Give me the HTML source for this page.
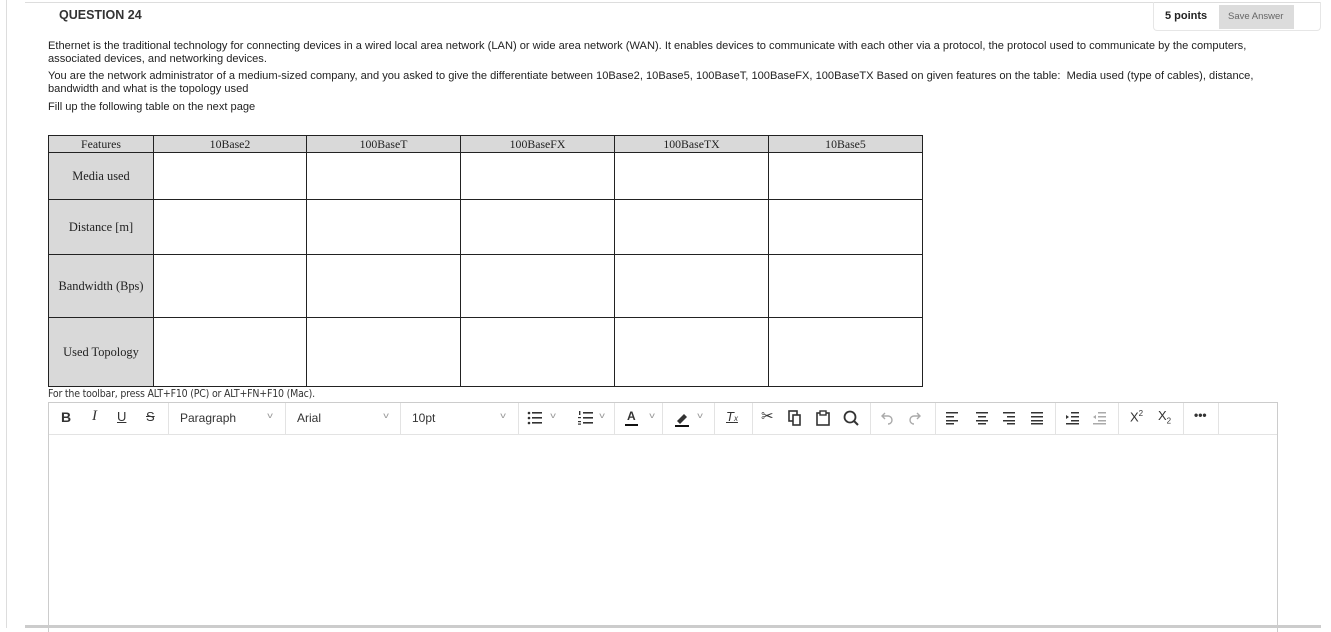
<!DOCTYPE html>
<html><head><meta charset="utf-8"><style>
*{margin:0;padding:0;box-sizing:border-box}
body{width:1331px;height:628px;background:#fff;position:relative;overflow:hidden;font-family:"Liberation Sans",Arial,sans-serif;color:#222}
.a{position:absolute}
.p{font-size:11.1px;color:#222;line-height:12.5px;left:48px;width:1290px}
.c{position:absolute;border:1px solid #222;font-family:"Liberation Serif",serif;font-size:12.4px;color:#222;display:flex;align-items:center;justify-content:center}
.h{font-size:11.8px}
.g{background:#d9d9d9}
.sep{position:absolute;top:403px;height:31px;width:1px;background:#e3e3e3}
.t{position:absolute;top:411px;font-size:12px;color:#333}
.chev{position:absolute;top:411px;font-size:8px;color:#999;transform:scaleX(1.4)}
</style></head><body>
<div class="a" style="left:6px;top:0;width:1px;height:628px;background:#ddd"></div>
<div class="a" style="left:25px;top:2px;width:1296px;height:1px;background:#ddd"></div>
<div class="a" style="left:1153px;top:2px;width:168px;height:29px;border:1px solid #e6e6e6;border-top:none;border-radius:0 0 4px 4px"></div>
<div class="a" style="left:1219px;top:5px;width:75px;height:24px;background:#dcdcdc"></div>
<div class="a" style="left:1228px;top:11px;font-size:9.5px;color:#666">Save Answer</div>
<div class="a" style="left:1165px;top:10px;font-size:11px;font-weight:bold;color:#222">5 points</div>
<div class="a" style="left:59px;top:8px;font-size:12.5px;font-weight:bold;color:#333">QUESTION 24</div>
<div class="a p" style="top:40px">Ethernet is the traditional technology for connecting devices in a wired local area network (LAN) or wide area network (WAN). It enables devices to communicate with each other via a protocol, the protocol used to communicate by the computers,<br>associated devices, and networking devices.</div>
<div class="a p" style="top:70px">You are the network administrator of a medium-sized company, and you asked to give the differentiate between 10Base2, 10Base5, 100BaseT, 100BaseFX, 100BaseTX Based on given features on the table:&nbsp; Media used (type of cables), distance,<br>bandwidth and what is the topology used</div>
<div class="a p" style="top:101px">Fill up the following table on the next page</div>

<div class="c g h" style="left:48px;top:135px;width:106px;height:18px">Features</div>
<div class="c g h" style="left:153px;top:135px;width:154px;height:18px">10Base2</div>
<div class="c g h" style="left:306px;top:135px;width:155px;height:18px">100BaseT</div>
<div class="c g h" style="left:460px;top:135px;width:155px;height:18px">100BaseFX</div>
<div class="c g h" style="left:614px;top:135px;width:155px;height:18px">100BaseTX</div>
<div class="c g h" style="left:768px;top:135px;width:155px;height:18px">10Base5</div>

<div class="c g" style="left:48px;top:152px;width:106px;height:48px">Media used</div>
<div class="c g" style="left:48px;top:199px;width:106px;height:56px">Distance [m]</div>
<div class="c g" style="left:48px;top:254px;width:106px;height:64px">Bandwidth (Bps)</div>
<div class="c g" style="left:48px;top:317px;width:106px;height:70px">Used Topology</div>

<div class="c" style="left:153px;top:152px;width:154px;height:48px"></div><div class="c" style="left:306px;top:152px;width:155px;height:48px"></div><div class="c" style="left:460px;top:152px;width:155px;height:48px"></div><div class="c" style="left:614px;top:152px;width:155px;height:48px"></div><div class="c" style="left:768px;top:152px;width:155px;height:48px"></div>
<div class="c" style="left:153px;top:199px;width:154px;height:56px"></div><div class="c" style="left:306px;top:199px;width:155px;height:56px"></div><div class="c" style="left:460px;top:199px;width:155px;height:56px"></div><div class="c" style="left:614px;top:199px;width:155px;height:56px"></div><div class="c" style="left:768px;top:199px;width:155px;height:56px"></div>
<div class="c" style="left:153px;top:254px;width:154px;height:64px"></div><div class="c" style="left:306px;top:254px;width:155px;height:64px"></div><div class="c" style="left:460px;top:254px;width:155px;height:64px"></div><div class="c" style="left:614px;top:254px;width:155px;height:64px"></div><div class="c" style="left:768px;top:254px;width:155px;height:64px"></div>
<div class="c" style="left:153px;top:317px;width:154px;height:70px"></div><div class="c" style="left:306px;top:317px;width:155px;height:70px"></div><div class="c" style="left:460px;top:317px;width:155px;height:70px"></div><div class="c" style="left:614px;top:317px;width:155px;height:70px"></div><div class="c" style="left:768px;top:317px;width:155px;height:70px"></div>

<div class="a" style="left:48px;top:388px;font-size:10.5px;color:#333;font-family:'DejaVu Sans Condensed','Liberation Sans',sans-serif;letter-spacing:-0.2px">For the toolbar, press ALT+F10 (PC) or ALT+FN+F10 (Mac).</div>

<div class="a" style="left:48px;top:402px;width:1230px;height:230px;border:1px solid #ccc;border-bottom:none"></div>
<div class="a" style="left:49px;top:434px;width:1228px;height:1px;background:#e3e3e3"></div>
<div class="a" style="left:25px;top:625px;width:1296px;height:3px;background:#ccc"></div>

<div class="t" style="left:61px;font-weight:bold;font-size:14px;top:409px">B</div>
<div class="t" style="left:92px;font-style:italic;font-family:'Liberation Serif',serif;font-size:15px;top:408px">I</div>
<div class="t" style="left:117px;text-decoration:underline;font-size:13px;top:409px">U</div>
<div class="t" style="left:146px;text-decoration:line-through;font-size:13px;top:409px">S</div>
<div class="sep" style="left:168px"></div>
<div class="t" style="left:180px">Paragraph</div><div class="chev" style="left:268px">v</div>
<div class="sep" style="left:285px"></div>
<div class="t" style="left:297px">Arial</div><div class="chev" style="left:384px">v</div>
<div class="sep" style="left:400px"></div>
<div class="t" style="left:412px">10pt</div><div class="chev" style="left:501px">v</div>
<div class="sep" style="left:518px"></div>
<svg class="a" style="left:527px;top:411px" width="16" height="14"><g fill="#333"><circle cx="2" cy="2" r="1.3"/><circle cx="2" cy="7" r="1.3"/><circle cx="2" cy="12" r="1.3"/><rect x="5" y="1" width="10" height="1.6"/><rect x="5" y="6" width="10" height="1.6"/><rect x="5" y="11" width="10" height="1.6"/></g></svg><div class="chev" style="left:551px">v</div>
<svg class="a" style="left:578px;top:411px" width="16" height="14"><g fill="#333"><rect x="1" y="0" width="1.4" height="4"/><rect x="0" y="6" width="3" height="1.2"/><rect x="0" y="10" width="3" height="1.2"/><rect x="0" y="12.5" width="3" height="1.2"/><rect x="5" y="1" width="10" height="1.6"/><rect x="5" y="6" width="10" height="1.6"/><rect x="5" y="11" width="10" height="1.6"/></g></svg><div class="chev" style="left:600px">v</div>
<div class="sep" style="left:614px"></div>
<div class="t" style="left:627px;font-weight:bold;font-size:12px;top:409px">A</div><div class="a" style="left:625px;top:424px;width:13px;height:2px;background:#111"></div><div class="chev" style="left:650px">v</div>
<div class="sep" style="left:662px"></div>
<svg class="a" style="left:674px;top:411px" width="16" height="16"><path d="M3 10 L10 3 L13 6 L6 13 Z" fill="#333"/><rect x="1" y="14" width="14" height="2" fill="#111"/></svg><div class="chev" style="left:698px">v</div>
<div class="sep" style="left:714px"></div>
<div class="t" style="left:726px;font-style:italic;text-decoration:underline;font-size:13px;top:409px">T<span style="font-size:8px">x</span></div>
<div class="sep" style="left:752px"></div>
<div class="t" style="left:761px;font-size:15px;top:407px">&#x2702;</div>
<svg class="a" style="left:788px;top:410px" width="14" height="16"><rect x="1" y="1" width="8" height="10" fill="none" stroke="#333" stroke-width="1.6"/><rect x="5" y="5" width="7" height="10" fill="#fff" stroke="#333" stroke-width="1.6"/></svg>
<svg class="a" style="left:816px;top:410px" width="15" height="16"><rect x="1" y="3" width="12" height="12" fill="none" stroke="#333" stroke-width="1.6"/><rect x="4" y="1" width="6" height="4" fill="#fff" stroke="#333" stroke-width="1.4"/></svg>
<svg class="a" style="left:843px;top:410px" width="16" height="16"><circle cx="7" cy="7" r="5.5" fill="none" stroke="#333" stroke-width="1.8"/><path d="M11 11 L15 15" stroke="#333" stroke-width="2"/></svg>
<div class="sep" style="left:870px"></div>
<svg class="a" style="left:880px;top:411px" width="14" height="14"><path d="M5 2 L2 5 L5 8 M2 5 H8 A4 4 0 0 1 8 13" fill="none" stroke="#aaa" stroke-width="1.4"/></svg>
<svg class="a" style="left:908px;top:411px" width="14" height="14"><path d="M9 2 L12 5 L9 8 M12 5 H6 A4 4 0 0 0 6 13" fill="none" stroke="#aaa" stroke-width="1.4"/></svg>
<div class="sep" style="left:935px"></div>
<svg class="a" style="left:946px;top:412px" width="110" height="13"><g fill="#333">
<rect x="0" y="0" width="12" height="1.5"/><rect x="0" y="4" width="8" height="1.5"/><rect x="0" y="8" width="12" height="1.5"/><rect x="0" y="11" width="8" height="1.5"/>
<rect x="30" y="0" width="12" height="1.5"/><rect x="32" y="4" width="8" height="1.5"/><rect x="30" y="8" width="12" height="1.5"/><rect x="32" y="11" width="8" height="1.5"/>
<rect x="57" y="0" width="12" height="1.5"/><rect x="61" y="4" width="8" height="1.5"/><rect x="57" y="8" width="12" height="1.5"/><rect x="61" y="11" width="8" height="1.5"/>
<rect x="85" y="0" width="12" height="1.5"/><rect x="85" y="4" width="12" height="1.5"/><rect x="85" y="8" width="12" height="1.5"/><rect x="85" y="11" width="12" height="1.5"/></g></svg>
<div class="sep" style="left:1055px"></div>
<svg class="a" style="left:1066px;top:412px" width="50" height="13"><g fill="#333"><rect x="5" y="0" width="8" height="1.5"/><rect x="5" y="4" width="8" height="1.5"/><rect x="5" y="8" width="8" height="1.5"/><rect x="0" y="11" width="13" height="1.5"/><path d="M0 3 L3 5 L0 7Z"/></g>
<g fill="#aaa"><rect x="32" y="0" width="8" height="1.5"/><rect x="32" y="4" width="8" height="1.5"/><rect x="32" y="8" width="8" height="1.5"/><rect x="27" y="11" width="13" height="1.5"/><path d="M30 3 L27 5 L30 7Z"/></g></svg>
<div class="sep" style="left:1118px"></div>
<div class="t" style="left:1130px;font-size:13px;top:409px">X<sup style="font-size:8px">2</sup></div>
<div class="t" style="left:1158px;font-size:13px;top:408px">X<sub style="font-size:8px">2</sub></div>
<div class="sep" style="left:1183px"></div>
<div class="t" style="left:1194px;font-weight:bold;font-size:12px;top:408px">•••</div>
<div class="sep" style="left:1218px"></div>
</body></html>
